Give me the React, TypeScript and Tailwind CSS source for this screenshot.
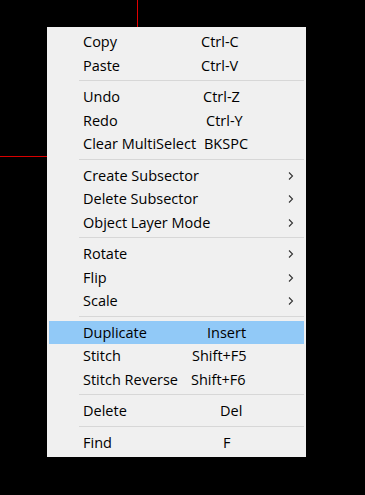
import React from "react";

type Item =
  | { kind: "item"; label: string; shortcut?: string; lw?: string; sub?: boolean; active?: boolean }
  | { kind: "sep" };

const items: Item[] = [
  { kind: "item", label: "Copy", shortcut: "Ctrl-C", lw: "w-[118px]" },
  { kind: "item", label: "Paste", shortcut: "Ctrl-V", lw: "w-[118px]" },
  { kind: "sep" },
  { kind: "item", label: "Undo", shortcut: "Ctrl-Z", lw: "w-[120px]" },
  { kind: "item", label: "Redo", shortcut: "Ctrl-Y", lw: "w-[123px]" },
  { kind: "item", label: "Clear MultiSelect", shortcut: "BKSPC", lw: "w-[121px]" },
  { kind: "sep" },
  { kind: "item", label: "Create Subsector", sub: true },
  { kind: "item", label: "Delete Subsector", sub: true },
  { kind: "item", label: "Object Layer Mode", sub: true },
  { kind: "sep" },
  { kind: "item", label: "Rotate", sub: true },
  { kind: "item", label: "Flip", sub: true },
  { kind: "item", label: "Scale", sub: true },
  { kind: "sep" },
  { kind: "item", label: "Duplicate", shortcut: "Insert", lw: "w-[124px]", active: true },
  { kind: "item", label: "Stitch", shortcut: "Shift+F5", lw: "w-[109px]" },
  { kind: "item", label: "Stitch Reverse", shortcut: "Shift+F6", lw: "w-[108px]" },
  { kind: "sep" },
  { kind: "item", label: "Delete", shortcut: "Del", lw: "w-[137px]" },
  { kind: "sep" },
  { kind: "item", label: "Find", shortcut: "F", lw: "w-[140px]" },
];

function Chevron() {
  return (
    <svg width="6" height="10" viewBox="0 0 6 10" className="ml-auto mr-[10px]">
      <path d="M1 1.5 L4.5 5 L1 8.5" fill="none" stroke="#333333" strokeWidth="1.1" />
    </svg>
  );
}

export default function App() {
  return (
    <div className="relative w-[365px] h-[495px] bg-black overflow-hidden" style={{ fontFamily: '"Open Sans", "Noto Sans", sans-serif' }}>
      <div className="absolute left-[137px] top-0 w-px h-[27px] bg-[#e00000]" />
      <div className="absolute left-0 top-[156px] w-[47px] h-px bg-[#d80000]" />
      <div className="absolute left-[47px] top-[27px] w-[259px] h-[430px] bg-[#f0f0f0] pt-[3px] flex flex-col">
        {items.map((it, i) =>
          it.kind === "sep" ? (
            <div key={i} className="h-[8px] shrink-0 pt-[3px] pl-[32px] pr-[2px]">
              <div className="h-px bg-[#d7d7d7]" />
            </div>
          ) : (
            <div
              key={i}
              className={
                "h-[23.5px] shrink-0 mx-[2px] flex items-center pl-[34px] pt-[1px] text-[14.5px] text-black leading-none " +
                (it.active ? "bg-[#91c9f7]" : "")
              }
            >
              <span className={"shrink-0 whitespace-nowrap " + (it.lw ?? "")}>{it.label}</span>
              {it.shortcut && <span className="whitespace-nowrap">{it.shortcut}</span>}
              {it.sub && <Chevron />}
            </div>
          )
        )}
      </div>
    </div>
  );
}
